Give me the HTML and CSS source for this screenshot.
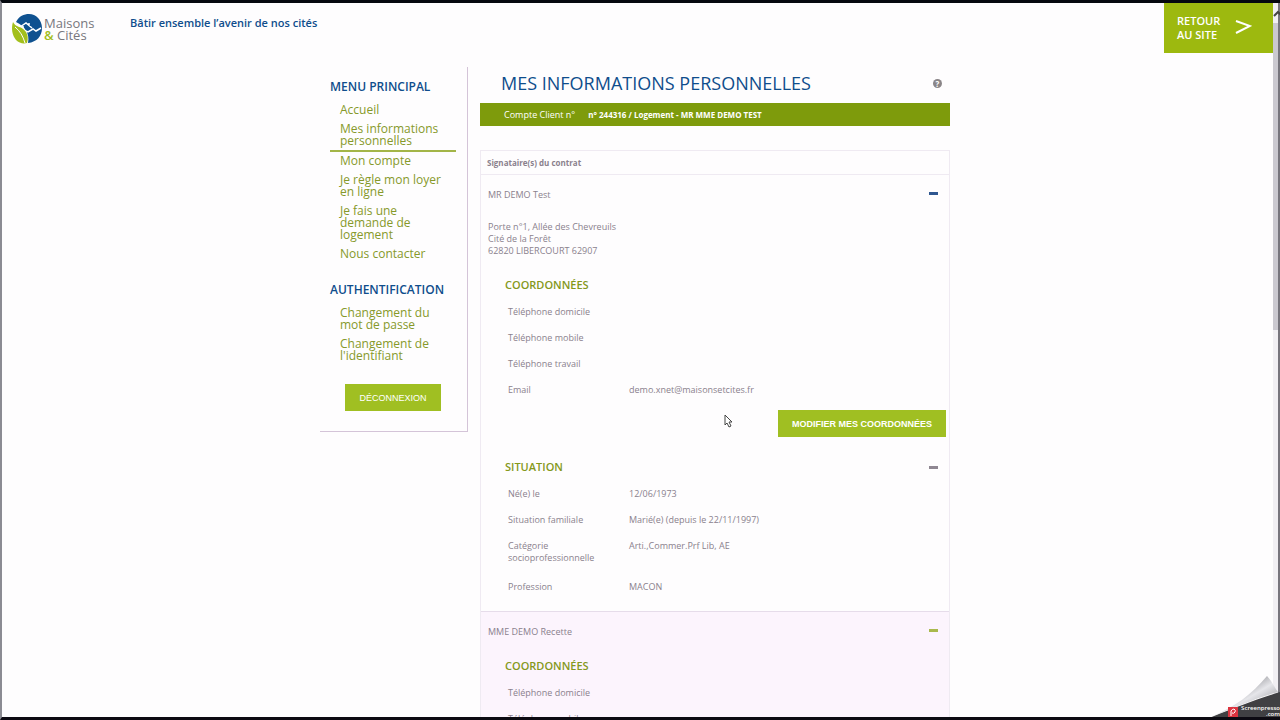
FILE: index.html
```html
<!DOCTYPE html>
<html lang="fr">

<head>
    <meta charset="UTF-8">
    <meta name="viewport" content="width=device-width, initial-scale=1.0">
    <title>Maisons &amp; Cités - Mes informations personnelles</title>
    <link rel="stylesheet" href="styles.css">
</head>

<body>
    <div class="page">
        <header class="header">
            <a class="logo" href="#">
                <svg width="32" height="32" viewBox="0 0 32 32">
                    <!-- Blue disc -->
                    <path d="M5 9C8 3 13 1 18 1C25 1 31 7 31 15C31 23 26 29 17 30C19 21 14 13 5 9Z" fill="#0f5190" />
                    <!-- House and roofs -->
                    <path d="M9 14L15 10L21 15M18 13V10M12 13V17M10 16L17 19L22 16L25 18L30 15" fill="none" stroke="#fff" stroke-width="1.5" />
                    <!-- Leaf -->
                    <path d="M2 9C0 15 1 22 5 27C8 30 12 31 16 30C19 21 13 15 8 14C5 13 3 11 2 9Z" fill="#a3bf1c" />
                    <path d="M4 14C9 18 12 23 14 30" fill="none" stroke="#fff" stroke-width="1" />
                </svg>
                <span class="logo-name">
                    <span>Maisons</span>
                    <span><span class="logo-amp">&amp;</span> Cités</span>
                </span>
            </a>
            <p class="slogan">Bâtir ensemble l’avenir de nos cités</p>
            <a class="back" href="#">
                <span>RETOUR<br>AU SITE</span>
                <svg width="18" height="16" viewBox="0 0 18 16">
                    <path d="M2 1L16 6L2 13" fill="none" stroke="#fff" stroke-width="2" />
                </svg>
            </a>
        </header>

        <div class="container">
            <aside class="sidebar">
                <h2>MENU PRINCIPAL</h2>
                <ul>
                    <li><a href="#">Accueil</a></li>
                    <li class="active"><a href="#">Mes informations personnelles</a></li>
                    <li><a href="#">Mon compte</a></li>
                    <li><a href="#">Je règle mon loyer en ligne</a></li>
                    <li><a href="#">Je fais une demande de logement</a></li>
                    <li><a href="#">Nous contacter</a></li>
                </ul>
                <h2>AUTHENTIFICATION</h2>
                <ul>
                    <li><a href="#">Changement du mot de passe</a></li>
                    <li><a href="#">Changement de l'identifiant</a></li>
                </ul>
                <button class="btn logout" type="button">DÉCONNEXION</button>
            </aside>

            <main class="content">
                <div class="title-row">
                    <h1>MES INFORMATIONS PERSONNELLES</h1>
                    <button class="help" type="button" aria-label="Aide">?</button>
                </div>
                <div class="account">
                    <span>Compte Client n°</span>
                    <strong>n° 244316 / Logement - MR MME DEMO TEST</strong>
                </div>

                <div class="panel">
                    <h2 class="panel-title">Signataire(s) du contrat</h2>

                    <section class="person">
                        <div class="person-head">
                            <span>MR DEMO Test</span>
                            <button class="toggle toggle-blue" type="button" aria-label="Replier"></button>
                        </div>
                        <address>
                            Porte n°1, Allée des Chevreuils<br>
                            Cité de la Forêt<br>
                            62820 LIBERCOURT 62907
                        </address>

                        <div class="block-head">
                            <h3>COORDONNÉES</h3>
                        </div>
                        <dl class="fields">
                            <dt>Téléphone domicile</dt><dd></dd>
                            <dt>Téléphone mobile</dt><dd></dd>
                            <dt>Téléphone travail</dt><dd></dd>
                            <dt>Email</dt><dd>demo.xnet@maisonsetcites.fr</dd>
                        </dl>
                        <div class="actions">
                            <button class="btn btn-bold" type="button">MODIFIER MES COORDONNÉES</button>
                        </div>

                        <div class="block-head">
                            <h3>SITUATION</h3>
                            <button class="toggle toggle-grey" type="button" aria-label="Replier"></button>
                        </div>
                        <dl class="fields">
                            <dt>Né(e) le</dt><dd>12/06/1973</dd>
                            <dt>Situation familiale</dt><dd>Marié(e) (depuis le 22/11/1997)</dd>
                            <dt class="tall">Catégorie socioprofessionnelle</dt><dd>Arti.,Commer.Prf Lib, AE</dd>
                            <dt>Profession</dt><dd>MACON</dd>
                        </dl>
                    </section>

                    <section class="person person-alt">
                        <div class="person-head">
                            <span>MME DEMO Recette</span>
                            <button class="toggle toggle-green" type="button" aria-label="Replier"></button>
                        </div>
                        <div class="block-head">
                            <h3>COORDONNÉES</h3>
                        </div>
                        <dl class="fields">
                            <dt>Téléphone domicile</dt><dd></dd>
                            <dt>Téléphone mobile</dt><dd></dd>
                        </dl>
                    </section>
                </div>
            </main>
        </div>
    </div>

    <div class="scrollbar">
        <svg width="7" height="20" viewBox="0 0 7 20">
            <path d="M1 13L5 9L8 12" fill="none" stroke="#444" stroke-width="2" />
        </svg>
        <div class="thumb"></div>
    </div>

    <!-- Mouse pointer -->
    <svg class="pointer" width="9" height="15" viewBox="0 0 9 15">
        <path d="M1 1V11L3 9L5 13L7 12L5 8H8Z" fill="#fff" stroke="#444" stroke-width="1" />
    </svg>

    <!-- Folded corner -->
    <div class="corner">
        <svg width="76" height="45" viewBox="0 0 76 45">
            <defs>
                <linearGradient id="fold" x1="0" y1="0" x2="1" y2="1">
                    <stop offset="0.3" stop-color="#8d8d92" />
                    <stop offset="0.55" stop-color="#e6e6ea" />
                    <stop offset="0.8" stop-color="#a5a5aa" />
                </linearGradient>
            </defs>
            <path d="M0 45C28 34 50 25 76 17V45Z" fill="#404043" />
            <path d="M6 42C30 33 48 19 63 1C68 6 70 12 74 17C54 22 30 33 6 42Z" fill="url(#fold)" />
            <rect x="24" y="32" width="10" height="11" fill="#dc3440" />
            <path d="M27 41V36Q28 34 30 34Q32 35 31 37Q30 39 28 38" fill="none" stroke="#fff" stroke-width="1" />
        </svg>
        <div class="corner-text">
            <span>Screenpresso</span>
            <span>.com</span>
        </div>
    </div>
</body>

</html>
```

FILE: styles.css
```css
* {
    box-sizing: border-box;
}

body {
    display: flex;
    height: 100vh;
    margin: 0;
    overflow: hidden;
    position: relative;
    border-top: 3px solid #05080f;
    border-bottom: 3px solid #0c0a12;
    border-left: 2px solid #8b8b93;
    background-color: #fefdfe;
    color: #8a818d;
    font-family: "Open Sans", "Noto Sans", sans-serif;
    font-size: 9px;
    line-height: 12px;
}

h1,
h2,
h3,
p,
ul,
dl,
dd {
    margin: 0;
    padding: 0;
}

a {
    color: inherit;
    text-decoration: none;
}

button {
    border: none;
    padding: 0;
}

.page {
    flex: 1;
    min-width: 0;
    overflow: hidden;
}

/* Header */
.header {
    display: flex;
    align-items: flex-start;
    height: 64px;
}

.logo {
    display: flex;
    gap: 1px;
    width: 128px;
    padding: 10px 0 0 9px;
}

.logo-name {
    display: flex;
    flex-direction: column;
    padding-top: 4px;
    color: #77777d;
    font-size: 13px;
    font-weight: 500;
    line-height: 12px;
}

.logo-amp {
    color: #a3bf1c;
    font-weight: 600;
}

.slogan {
    padding-top: 12px;
    color: #0f4d8c;
    font-size: 11px;
    font-weight: 600;
    line-height: 16px;
}

.back {
    display: flex;
    align-items: center;
    gap: 14px;
    width: 109px;
    height: 50px;
    margin-left: auto;
    padding-left: 13px;
    background-color: #9db90f;
    color: #fff;
    font-size: 11px;
    font-weight: 600;
    line-height: 14px;
}

/* Columns */
.container {
    display: flex;
    align-items: flex-start;
    gap: 12px;
    max-width: 635px;
    margin: 0 auto;
    padding-right: 5px;
}

.sidebar {
    width: 148px;
    padding: 12px 11px 20px 10px;
    border-right: 1px solid #d4c4d8;
    border-bottom: 1px solid #d4c4d8;
    color: #86992a;
    font-size: 12px;
}

.sidebar h2 {
    color: #0f4d8c;
    font-size: 12px;
    font-weight: 600;
    line-height: 16px;
}

.sidebar ul {
    margin: 6px 0 18px;
    list-style: none;
}

.sidebar li {
    padding: 3px 10px 4px;
}

.sidebar .active {
    padding-bottom: 3px;
    border-bottom: 2px solid #a3b548;
}

.btn {
    height: 27px;
    padding: 0 14px;
    background-color: #a0bf22;
    color: #fff;
    font-family: "Liberation Sans", Arial, sans-serif;
    font-size: 9px;
}

.btn-bold {
    font-weight: bold;
}

.logout {
    display: block;
    margin: 0 auto;
}

/* Content */
.content {
    flex: 1;
    min-width: 0;
}

.title-row {
    display: flex;
    align-items: center;
    justify-content: space-between;
    height: 36px;
    padding: 0 8px 4px 21px;
}

h1 {
    color: #0f4d8c;
    font-size: 18px;
    font-weight: 500;
    line-height: 24px;
}

.help {
    width: 9px;
    height: 9px;
    border-radius: 50%;
    background-color: #8a8588;
    color: #fff;
    font-family: "Open Sans", sans-serif;
    font-size: 8px;
    font-weight: bold;
    line-height: 9px;
}

.account {
    display: flex;
    align-items: center;
    gap: 13px;
    height: 23px;
    padding-left: 24px;
    background-color: #7e9b0c;
    color: #fff;
}

.account strong {
    font-size: 8px;
}

.panel {
    margin-top: 24px;
    border: 1px solid #efeaf2;
}

.panel-title {
    padding: 6px;
    border-bottom: 1px solid #efeaf2;
    font-size: 8px;
    font-weight: bold;
    line-height: 11px;
}

.person {
    padding: 13px 3px 18px 7px;
}

.person-alt {
    border-top: 1px solid #e6dcea;
    background-color: #fcf4fd;
}

.person-head,
.block-head {
    display: flex;
    align-items: center;
    justify-content: space-between;
    padding-right: 8px;
}

.person-head {
    align-items: flex-start;
    padding-top: 1px;
}

.person-head .toggle {
    margin-top: 3px;
}

address {
    padding-top: 20px;
    font-style: normal;
}

.block-head {
    padding: 20px 8px 0 17px;
}

h3 {
    color: #84981b;
    font-size: 11px;
    font-weight: 600;
    line-height: 16px;
}

.toggle {
    width: 9px;
    height: 3px;
}

.toggle-blue {
    background-color: #2f5790;
}

.toggle-grey {
    background-color: #8f8792;
}

.toggle-green {
    background-color: #a9b94c;
}

.fields {
    display: grid;
    grid-template-columns: 100px 1fr;
    gap: 14px 21px;
    padding: 13px 0 0 20px;
}

.fields .tall {
    padding-bottom: 3px;
}

.actions {
    display: flex;
    justify-content: flex-end;
    padding: 14px 0 2px;
}

/* Window scrollbar */
.scrollbar {
    display: flex;
    flex-direction: column;
    width: 7px;
    border-right: 2px solid #77757d;
    background-color: #f1eff3;
}

.thumb {
    height: 43%;
    background-color: #cbc9d0;
}

.pointer {
    position: absolute;
    left: 722px;
    top: 411px;
}

.corner {
    position: absolute;
    right: 0;
    bottom: -3px;
    height: 45px;
}

.corner-text {
    display: flex;
    flex-direction: column;
    align-items: flex-end;
    position: absolute;
    right: 0;
    bottom: 3px;
    color: #fff;
    font-size: 6px;
    font-weight: 600;
    line-height: 6px;
}
```
